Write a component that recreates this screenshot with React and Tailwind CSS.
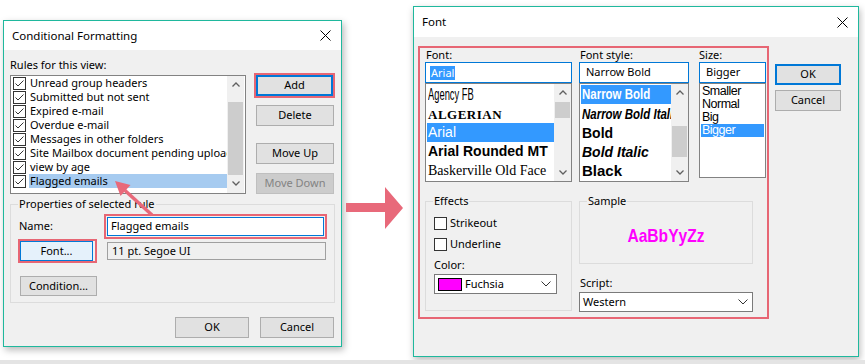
import React from "react";

const UI = "font-['Noto_Sans',sans-serif] text-[11px] text-black";

function XIcon() {
  return (
    <svg width="11" height="11" viewBox="0 0 11 11">
      <path d="M0.5 0.5 L10.5 10.5 M10.5 0.5 L0.5 10.5" stroke="#000" strokeWidth="1" fill="none" />
    </svg>
  );
}

function Up() {
  return (
    <svg width="8" height="5" viewBox="0 0 8 5">
      <polyline points="0.5,4.5 4,1 7.5,4.5" fill="none" stroke="#606060" strokeWidth="1.3" />
    </svg>
  );
}
function Down() {
  return (
    <svg width="8" height="5" viewBox="0 0 8 5">
      <polyline points="0.5,0.5 4,4 7.5,0.5" fill="none" stroke="#606060" strokeWidth="1.3" />
    </svg>
  );
}
function DropChevron() {
  return (
    <svg width="10" height="6" viewBox="0 0 10 6">
      <polyline points="0.5,0.5 5,5 9.5,0.5" fill="none" stroke="#333" strokeWidth="1" />
    </svg>
  );
}

function CheckBox({ checked }) {
  return (
    <span className="w-[13px] h-[13px] border border-[#333] bg-white shrink-0 flex items-center justify-center">
      {checked && (
        <svg width="11" height="11" viewBox="0 0 11 11">
          <polyline points="1.5,5.5 4,8 9.5,2.5" fill="none" stroke="#333" strokeWidth="1" />
        </svg>
      )}
    </span>
  );
}

function Btn({ children, className = "" }) {
  return (
    <div className={"flex items-center justify-center bg-[#e1e1e1] border border-[#adadad] " + className}>
      {children}
    </div>
  );
}

const rules = [
  "Unread group headers",
  "Submitted but not sent",
  "Expired e-mail",
  "Overdue e-mail",
  "Messages in other folders",
  "Site Mailbox document pending upload",
  "view by age",
  "Flagged emails",
];

function LeftDialog() {
  return (
    <div className={"ml-[3px] mt-[20px] w-[339px] h-[327px] border border-[#1fb89d] bg-[#f0f0f0] flex flex-col shrink-0 shadow-[2px_3px_7px_rgba(0,0,0,0.28)] " + UI}>
      <div className="h-[29px] bg-white flex items-center justify-between pl-[8px] pr-[10px] text-[11.5px]">
        <span>Conditional Formatting</span>
        <XIcon />
      </div>
      <div className="flex-1 pl-[6px] pt-[7px] flex flex-col">
        <div className="h-[16px] leading-[16px]">Rules for this view:</div>
        <div className="flex items-start">
          <div className="mt-[2px] w-[236px] h-[119px] border border-[#828282] bg-white flex">
            <div className="w-[216px] flex flex-col pl-[2px] overflow-hidden">
              {rules.map((r, i) => (
                <div key={r} className="h-[14px] flex items-center shrink-0">
                  <CheckBox checked />
                  <span
                    className={
                      "ml-[3px] pl-[1px] h-[14px] leading-[14px] whitespace-nowrap flex-1 " +
                      (i === 7 ? "bg-[#a6cbf0]" : "")
                    }
                  >
                    {r}
                  </span>
                </div>
              ))}
            </div>
            <div className="w-[17px] bg-[#f0f0f0] flex flex-col">
              <div className="h-[17px] flex items-center justify-center"><Up /></div>
              <div className="mt-[9px] h-[73px] mx-[1px] bg-[#cdcdcd]" />
              <div className="h-[17px] flex items-center justify-center"><Down /></div>
            </div>
          </div>
          <div className="ml-[8px] w-[81px] flex flex-col">
            <div className="h-[25px] border-2 border-[#e76674]">
              <div className="h-full border-2 border-[#0078d7] bg-[#e1e1e1] flex items-center justify-center">Add</div>
            </div>
            <Btn className="mt-[7px] ml-[2px] w-[78px] h-[21px]">Delete</Btn>
            <Btn className="mt-[17px] ml-[2px] w-[78px] h-[21px]">Move Up</Btn>
            <div className="mt-[9px] ml-[2px] w-[78px] h-[21px] flex items-center justify-center bg-[#cccccc] border border-[#bfbfbf] text-[#838383]">
              Move Down
            </div>
          </div>
        </div>
        <div className="mt-[10px] w-[325px] h-[99px] border border-[#dcdcdc] relative pt-[9px] pl-[8px]">
          <span className="absolute left-[7px] top-[-9px] px-[1px] bg-[#f0f0f0] leading-[16px]">Properties of selected rule</span>
          <div className="flex items-center h-[25px]">
            <span className="w-[85px]">Name:</span>
            <div className="w-[223px] h-[25px] border-2 border-[#e76674] p-[1px]">
              <div className="h-full border border-[#0078d7] bg-white flex items-center pl-[3px]">Flagged emails</div>
            </div>
          </div>
          <div className="flex items-center h-[24px]">
            <div className="-ml-[1px] w-[79px] h-[24px] border-2 border-[#e76674]">
              <div className="w-[73px] h-[20px] border border-[#0078d7] bg-[#e5f1fb] flex items-center justify-center">Font...</div>
            </div>
            <div className="ml-[10px] w-[219px] h-[18px] border border-[#a0a0a0] flex items-center pl-[4px]">11 pt. Segoe UI</div>
          </div>
          <Btn className="mt-[13px] ml-[1px] w-[77px] h-[20px]">Condition...</Btn>
        </div>
        <div className="mt-[14px] flex justify-end pr-[7px] gap-[11px]">
          <Btn className="w-[74px] h-[21px]">OK</Btn>
          <Btn className="w-[74px] h-[21px]">Cancel</Btn>
        </div>
      </div>
    </div>
  );
}

const fontRows = [
  { t: "Agency FB", h: "h-[22px]", cls: "font-['Liberation_Sans',sans-serif] text-[17px] scale-x-[0.55] origin-left" },
  { t: "ALGERIAN", h: "h-[17px]", cls: "font-['Liberation_Serif',serif] font-bold text-[13px] tracking-[0.5px]" },
  { t: "Arial", h: "h-[19px]", cls: "font-['Liberation_Sans',sans-serif] text-[14px]", sel: true },
  { t: "Arial Rounded MT", h: "h-[19px]", cls: "font-['Liberation_Sans',sans-serif] font-bold text-[14px]" },
  { t: "Baskerville Old Face", h: "h-[19px]", cls: "font-['Liberation_Serif',serif] text-[14px]" },
];

const styleRows = [
  { t: "Narrow Bold", cls: "font-bold scale-x-[0.82] origin-left", sel: true },
  { t: "Narrow Bold Italic", cls: "font-bold italic scale-x-[0.82] origin-left" },
  { t: "Bold", cls: "font-bold" },
  { t: "Bold Italic", cls: "font-bold italic" },
  { t: "Black", cls: "font-bold text-[15px]" },
];

function RightDialog() {
  return (
    <div className={"ml-[71px] mt-[6px] w-[446px] h-[351px] border border-[#1fb89d] bg-[#f0f0f0] flex flex-col shrink-0 shadow-[1px_3px_7px_rgba(0,0,0,0.28)] " + UI}>
      <div className="h-[30px] bg-white flex items-center justify-between pl-[8px] pr-[10px] text-[11.5px]">
        <span>Font</span>
        <XIcon />
      </div>
      <div className="flex-1 pl-[4px] pt-[9px] flex items-start">
        <div className="w-[351px] h-[273px] border-2 border-[#e76674] pl-[5px] flex flex-col">
          <div className="flex items-start">
            <div className="w-[147px] flex flex-col">
              <div className="h-[14px] leading-[14px] pl-[1px]">Font:</div>
              <div className="h-[21px] border border-[#0078d7] bg-white flex items-center pl-[4px]">
                <span className="bg-[#3399ff] text-white px-[1px] leading-[14px]">Arial</span>
              </div>
              <div className="h-[99px] border border-[#828282] bg-white flex">
                <div className="w-[128px] flex flex-col overflow-hidden">
                  {fontRows.map((r) => (
                    <div
                      key={r.t}
                      className={
                        r.h + " flex items-center whitespace-nowrap pl-[1px] ml-[1px] " +
                        (r.sel ? "bg-[#3399ff] text-white" : "text-black")
                      }
                    >
                      <span className={"inline-block " + r.cls}>{r.t}</span>
                    </div>
                  ))}
                </div>
                <div className="w-[17px] bg-[#f0f0f0] flex flex-col">
                  <div className="h-[17px] flex items-center justify-center"><Up /></div>
                  <div className="mt-[1px] h-[16px] mx-[1px] bg-[#cdcdcd]" />
                  <div className="flex-1" />
                  <div className="h-[17px] flex items-center justify-center"><Down /></div>
                </div>
              </div>
            </div>
            <div className="ml-[7px] w-[110px] flex flex-col">
              <div className="h-[14px] leading-[14px] pl-[1px]">Font style:</div>
              <div className="h-[21px] border border-[#0078d7] bg-white flex items-center pl-[6px]">Narrow Bold</div>
              <div className="h-[99px] border border-[#828282] bg-white flex">
                <div className="w-[91px] flex flex-col overflow-hidden pt-[1px] font-['Liberation_Sans',sans-serif] text-[14px]">
                  {styleRows.map((r) => (
                    <div
                      key={r.t}
                      className={
                        "h-[19px] shrink-0 flex items-center whitespace-nowrap ml-[1px] pl-[1px] " +
                        (r.sel ? "bg-[#3399ff] text-white h-[18px] mb-[1px]" : "text-black")
                      }
                    >
                      <span className={"inline-block " + r.cls}>{r.t}</span>
                    </div>
                  ))}
                </div>
                <div className="w-[17px] bg-[#f0f0f0] flex flex-col">
                  <div className="h-[17px] flex items-center justify-center"><Up /></div>
                  <div className="mt-[25px] h-[31px] mx-[1px] bg-[#cdcdcd]" />
                  <div className="flex-1" />
                  <div className="h-[17px] flex items-center justify-center"><Down /></div>
                </div>
              </div>
            </div>
            <div className="ml-[10px] w-[67px] flex flex-col">
              <div className="h-[14px] leading-[14px]">Size:</div>
              <div className="h-[21px] border border-[#0078d7] bg-white flex items-center pl-[6px]">Bigger</div>
              <div className="h-[95px] border border-[#828282] bg-white flex flex-col pt-[1px] font-['Liberation_Sans',sans-serif] text-[12.5px] tracking-[-0.5px]">
                {["Smaller", "Normal", "Big", "Bigger"].map((s) => (
                  <div
                    key={s}
                    className={"h-[13px] leading-[13px] mx-[1px] pl-[1px] " + (s === "Bigger" ? "bg-[#3399ff] text-white" : "")}
                  >
                    {s}
                  </div>
                ))}
              </div>
            </div>
          </div>
          <div className="mt-[19px] flex items-start">
            <div className="w-[147px] h-[110px] border border-[#dcdcdc] relative pt-[15px] pl-[8px] flex flex-col">
              <span className="absolute left-[7px] top-[-9px] px-[1px] bg-[#f0f0f0] leading-[16px]">Effects</span>
              <div className="flex items-center h-[13px]">
                <CheckBox />
                <span className="ml-[3px]">Strikeout</span>
              </div>
              <div className="mt-[8px] flex items-center h-[13px]">
                <CheckBox />
                <span className="ml-[3px]">Underline</span>
              </div>
              <div className="mt-[6px] h-[16px] leading-[16px]">Color:</div>
              <div className="mt-[1px] w-[123px] h-[20px] border border-[#7a7a7a] bg-white flex items-center pl-[3px] pr-[5px]">
                <span className="w-[24px] h-[13px] bg-[#ff00ff] border border-black" />
                <span className="ml-[3px] flex-1">Fuchsia</span>
                <DropChevron />
              </div>
            </div>
            <div className="ml-[7px] w-[174px] flex flex-col">
              <div className="h-[63px] border border-[#dcdcdc] relative flex items-center justify-center pt-[8px]">
                <span className="absolute left-[7px] top-[-9px] px-[1px] bg-[#f0f0f0] leading-[16px]">Sample</span>
                <span className="inline-block font-['Liberation_Sans',sans-serif] font-bold text-[19px] text-[#ff00ff] scale-x-[0.82]">AaBbYyZz</span>
              </div>
              <div className="mt-[11px] h-[16px] leading-[16px] pl-[1px]">Script:</div>
              <div className="mt-[1px] h-[20px] border border-[#7a7a7a] bg-white flex items-center pl-[3px] pr-[4px]">
                <span className="flex-1">Western</span>
                <DropChevron />
              </div>
            </div>
          </div>
        </div>
        <div className="ml-[6px] mt-[18px] w-[66px] flex flex-col">
          <div className="h-[21px] border-2 border-[#0078d7] bg-[#e1e1e1] flex items-center justify-center">OK</div>
          <Btn className="mt-[5px] h-[21px]">Cancel</Btn>
        </div>
      </div>
    </div>
  );
}

export default function App() {
  return (
    <div className="relative w-[865px] h-[364px] bg-white overflow-hidden flex flex-col">
      <div className="flex items-start">
        <LeftDialog />
        <RightDialog />
      </div>
      <div className="mt-[3px] h-[4px] w-full bg-[#e4e4e4]" />
      <svg className="absolute inset-0 pointer-events-none" width="865" height="364" viewBox="0 0 865 364">
        <polygon points="346,203 385,203 385,187 403,208 385,229 385,212 346,212" fill="#e8697a" />
        <line x1="152" y1="215" x2="125" y2="190.5" stroke="#e8697a" strokeWidth="3.5" />
        <polygon points="115,181 130.5,185 120.5,196" fill="#e8697a" />
      </svg>
    </div>
  );
}
